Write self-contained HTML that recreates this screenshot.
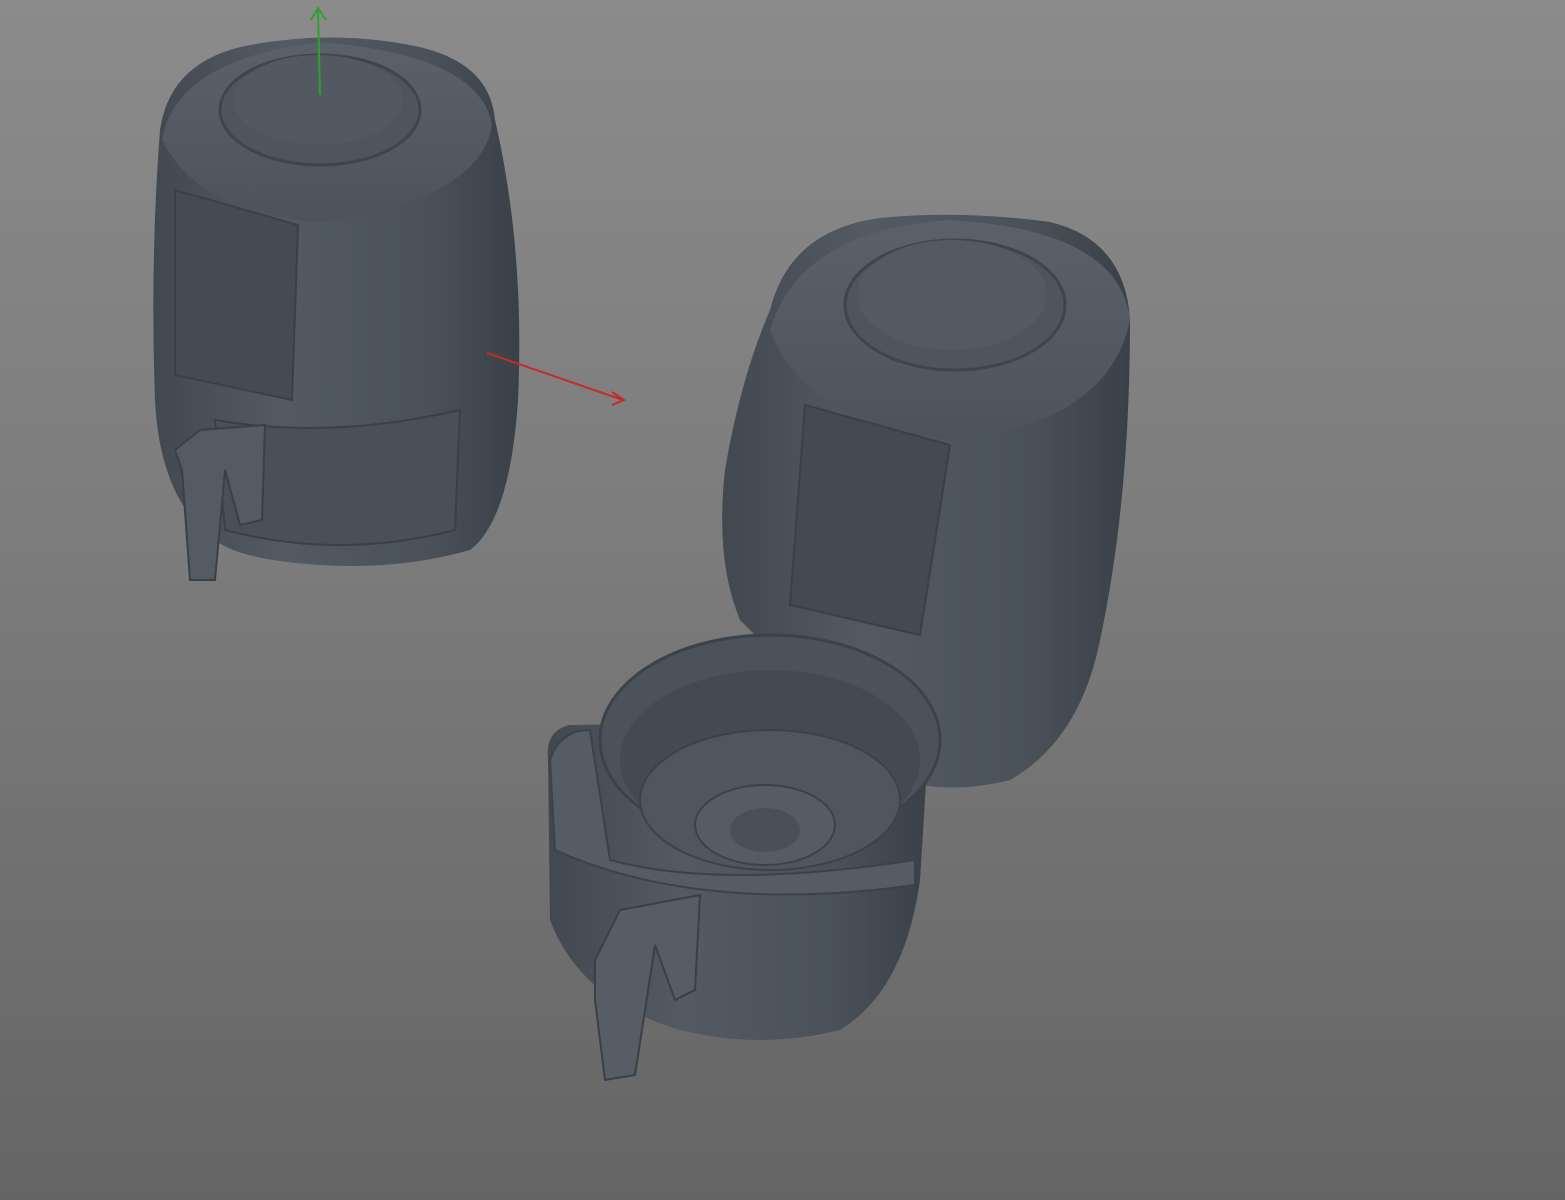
<!DOCTYPE html>
<html><head><meta charset="utf-8"><style>
html,body{margin:0;padding:0;width:1565px;height:1200px;overflow:hidden}
body{background:linear-gradient(#8b8b8b 0%,#7c7c7c 45%,#656565 100%)}
svg{position:absolute;left:0;top:0}
</style></head><body>
<svg width="1565" height="1200" viewBox="0 0 1565 1200">
<defs>
<linearGradient id="bd" x1="0" x2="1" y1="0" y2="0">
<stop offset="0" stop-color="#424850"/><stop offset="0.35" stop-color="#535a63"/><stop offset="0.75" stop-color="#4a5159"/><stop offset="1" stop-color="#3a4047"/></linearGradient>
<linearGradient id="tp" x1="0" x2="0" y1="0" y2="1">
<stop offset="0" stop-color="#5a616a"/><stop offset="1" stop-color="#4c535b"/></linearGradient>
</defs>
<!-- left fryer -->
<path d="M160 130 Q170 60 250 45 Q330 30 410 45 Q490 60 495 120 Q525 250 518 400 Q510 520 470 550 Q400 570 320 565 Q240 560 215 540 Q160 500 155 400 Q150 260 160 130Z" fill="url(#bd)"/>
<path d="M162 140 Q175 60 320 42 Q480 55 492 125 Q480 200 320 222 Q200 215 162 140Z" fill="url(#tp)"/>
<ellipse cx="320" cy="110" rx="100" ry="55" fill="#4e555d" stroke="#3f454c" stroke-width="3"/>
<ellipse cx="318" cy="100" rx="85" ry="45" fill="#525961"/>
<path d="M175 190 L298 225 L292 400 L175 375Z" fill="#454b53" stroke="#3a4047" stroke-width="2"/>
<path d="M215 420 Q330 440 460 410 L455 530 Q340 560 225 530Z" fill="#4a5058" stroke="#3a4047" stroke-width="2"/>
<path d="M175 450 L200 430 L265 425 L262 520 L240 525 L225 470 L215 580 L190 580 L182 470Z" fill="#545b63" stroke="#3a4047" stroke-width="2"/>
<line x1="320" y1="95" x2="318" y2="10" stroke="#2fa02f" stroke-width="2"/>
<path d="M311 20 L318 8 L326 20" fill="none" stroke="#2fa02f" stroke-width="2"/>
<line x1="487" y1="353" x2="623" y2="400" stroke="#c52b2b" stroke-width="2"/>
<path d="M612 392 L624 400 L612 405" fill="none" stroke="#c52b2b" stroke-width="2"/>
<!-- right fryer -->
<path d="M770 310 Q790 230 880 218 Q960 210 1050 222 Q1125 240 1130 320 Q1130 500 1100 640 Q1080 740 1010 780 Q950 795 900 780 L740 620 Q715 560 725 470 Q740 380 770 310Z" fill="url(#bd)"/>
<path d="M770 330 Q800 230 950 220 Q1120 230 1130 320 Q1110 420 960 440 Q810 430 770 330Z" fill="url(#tp)"/>
<ellipse cx="955" cy="305" rx="110" ry="65" fill="#4e555d" stroke="#3f454c" stroke-width="3"/>
<ellipse cx="952" cy="295" rx="95" ry="55" fill="#535a62"/>
<path d="M805 405 L950 445 L920 635 L790 605Z" fill="#444a52" stroke="#3a4047" stroke-width="2"/>
<!-- basket -->
<path d="M548 760 Q545 730 570 725 L930 720 L920 880 Q905 990 840 1030 Q760 1050 680 1030 Q580 1000 550 920Z" fill="url(#bd)"/>
<ellipse cx="770" cy="740" rx="170" ry="105" fill="#4b525a" stroke="#3c4249" stroke-width="3"/>
<ellipse cx="770" cy="760" rx="150" ry="90" fill="#444a52"/>
<ellipse cx="770" cy="800" rx="130" ry="70" fill="#4f565e" stroke="#3c4249" stroke-width="2"/>
<ellipse cx="765" cy="825" rx="70" ry="40" fill="#555c64" stroke="#3c4249" stroke-width="2"/>
<ellipse cx="765" cy="830" rx="35" ry="22" fill="#4a5058"/>
<path d="M550 760 Q560 730 590 730 L610 860 Q720 890 915 860 L915 885 Q700 915 555 850Z" fill="#555c64" stroke="#3c4249" stroke-width="2"/>
<path d="M595 960 L620 910 L700 895 L695 990 L675 1000 L655 945 L635 1075 L605 1080 L595 1000Z" fill="#565d65" stroke="#3a4047" stroke-width="2"/>
</svg>
</body></html>
